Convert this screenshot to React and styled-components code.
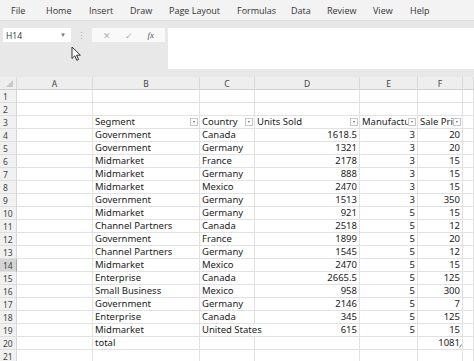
import React from "react";
import styled, { createGlobalStyle } from "styled-components";

const Global = createGlobalStyle`
  html, body { margin: 0; padding: 0; background: #ffffff; overflow: hidden; }
  body { font-family: "Noto Sans", "Open Sans", sans-serif; }
`;

const Page = styled.div`
  width: 474px;
  height: 361px;
  position: relative;
  overflow: hidden;
  background: #e8e8e8;
`;

const MenuBar = styled.div`
  height: 20px;
  display: flex;
  align-items: center;
  background: #f3f3f3;
  border-bottom: 1px solid #dcdcdc;
  padding-left: 11px;
  font-family: "Open Sans", sans-serif;
  font-size: 9px;
  color: #333;
`;

const MenuItem = styled.span`
  width: ${(p) => p.$w}px;
  flex: none;
  white-space: nowrap;
`;

const ToolRow = styled.div`
  height: 56px;
  display: flex;
  align-items: flex-start;
  padding-top: 7px;
  box-sizing: border-box;
  padding-left: 3px;
`;

const NameBox = styled.div`
  width: 68px;
  height: 14px;
  background: #fff;
  display: flex;
  align-items: center;
  justify-content: space-between;
  padding: 0 5px 0 3px;
  box-sizing: border-box;
  font-family: "Open Sans", sans-serif;
  font-size: 8.5px;
  color: #333;
`;

const Caret = styled.span`
  font-size: 6px;
  color: #777;
`;

const Dots = styled.div`
  width: 21px;
  height: 14px;
  display: flex;
  align-items: center;
  justify-content: center;
  color: #aaa;
  font-size: 9px;
`;

const FxBox = styled.div`
  width: 73px;
  height: 14px;
  background: #f9f9f9;
  display: flex;
  align-items: center;
  justify-content: space-around;
  padding: 0 4px;
  box-sizing: border-box;
  color: #b0b0b0;
  font-size: 9px;
`;

const Fx = styled.span`
  font-family: "Liberation Serif", serif;
  font-style: italic;
  color: #555;
  font-size: 9px;
`;

const FormulaBar = styled.div`
  flex: 1;
  height: 41px;
  margin-left: 3px;
  background: #fff;
`;

const Grid = styled.div`
  display: grid;
  grid-template-columns: 17px 76px 107px 55px 105px 58px 45px 1fr;
  grid-auto-rows: 13px;
  background: #fff;
  font-family: "Noto Sans", "Open Sans", sans-serif;
  font-size: 9.5px;
  color: #222;
`;

const ColHead = styled.div`
  height: 13px;
  background: #eeeeee;
  border-right: 1px solid #dadada;
  border-bottom: 1px solid #d0d0d0;
  box-sizing: border-box;
  display: flex;
  align-items: center;
  justify-content: center;
  font-size: 8.5px;
  color: #444;
  position: relative;
`;

const Corner = styled.span`
  position: absolute;
  right: 3px;
  bottom: 2px;
  width: 0;
  height: 0;
  border-left: 7px solid transparent;
  border-bottom: 7px solid #c8c8c8;
`;

const RowHead = styled.div`
  background: ${(p) => (p.$sel ? "#d4d4d4" : "#f1f1f1")};
  border-right: 1px solid ${(p) => (p.$sel ? "#a8a8a8" : "#d6d6d6")};
  border-bottom: 1px solid #dedede;
  box-sizing: border-box;
  font-size: 8.5px;
  color: #444;
  display: flex;
  align-items: center;
  padding-left: 3px;
`;

const Cell = styled.div`
  border-right: 1px solid #e2e2e2;
  border-bottom: 1px solid #e2e2e2;
  box-sizing: border-box;
  display: flex;
  align-items: center;
  justify-content: ${(p) => (p.$num ? "flex-end" : "flex-start")};
  padding: 0 ${(p) => (p.$num ? "2px" : "0")} 0 ${(p) => (p.$num ? "0" : "2px")};
  white-space: nowrap;
  position: relative;
  line-height: 12px;
  z-index: ${(p) => (p.$over ? 1 : 0)};
`;

const HeadCell = styled.div`
  border-right: 1px solid #e2e2e2;
  border-bottom: 1px solid #e2e2e2;
  box-sizing: border-box;
  display: flex;
  align-items: center;
  padding: 0 1px 0 2px;
  white-space: nowrap;
  overflow: hidden;
  line-height: 12px;
`;

const HeadText = styled.span`
  flex: 1;
  min-width: 0;
  overflow: hidden;
`;

const CellText = styled.span`
  background: ${(p) => (p.$over ? "#fff" : "transparent")};
`;

const Filter = styled.span`
  flex: none;
  width: 8px;
  height: 8px;
  background: #fff;
  border: 1px solid #c6c6c6;
  box-sizing: border-box;
  display: flex;
  align-items: center;
  justify-content: center;
  &::after {
    content: "";
    width: 0;
    height: 0;
    border-left: 1.5px solid transparent;
    border-right: 1.5px solid transparent;
    border-top: 2px solid #666;
  }
`;

const Cursor = styled.svg`
  position: absolute;
  left: 71px;
  top: 46px;
`;

const Handle = styled.svg`
  position: absolute;
  right: 0px;
  bottom: 1px;
`;

const menu = [
  ["File", 35],
  ["Home", 43],
  ["Insert", 41],
  ["Draw", 39],
  ["Page Layout", 68],
  ["Formulas", 54],
  ["Data", 36],
  ["Review", 46],
  ["View", 37],
  ["Help", 30],
];

const cols = ["", "A", "B", "C", "D", "E", "F", ""];

const data = [
  ["Government", "Canada", "1618.5", "3", "20"],
  ["Government", "Germany", "1321", "3", "20"],
  ["Midmarket", "France", "2178", "3", "15"],
  ["Midmarket", "Germany", "888", "3", "15"],
  ["Midmarket", "Mexico", "2470", "3", "15"],
  ["Government", "Germany", "1513", "3", "350"],
  ["Midmarket", "Germany", "921", "5", "15"],
  ["Channel Partners", "Canada", "2518", "5", "12"],
  ["Government", "France", "1899", "5", "20"],
  ["Channel Partners", "Germany", "1545", "5", "12"],
  ["Midmarket", "Mexico", "2470", "5", "15"],
  ["Enterprise", "Canada", "2665.5", "5", "125"],
  ["Small Business", "Mexico", "958", "5", "300"],
  ["Government", "Germany", "2146", "5", "7"],
  ["Enterprise", "Canada", "345", "5", "125"],
  ["Midmarket", "United States", "615", "5", "15"],
];

function HeaderCell({ text }) {
  return (
    <HeadCell>
      <HeadText>{text}</HeadText>
      <Filter />
    </HeadCell>
  );
}

function EmptyRow({ n }) {
  return (
    <>
      <RowHead>{n}</RowHead>
      {[0, 1, 2, 3, 4, 5, 6].map((i) => (
        <Cell key={i} />
      ))}
    </>
  );
}

export default function App() {
  return (
    <Page>
      <Global />
      <MenuBar>
        {menu.map(([m, w]) => (
          <MenuItem key={m} $w={w}>
            {m}
          </MenuItem>
        ))}
      </MenuBar>
      <ToolRow>
        <NameBox>
          <span>H14</span>
          <Caret>▼</Caret>
        </NameBox>
        <Dots>⋮</Dots>
        <FxBox>
          <span>✕</span>
          <span>✓</span>
          <Fx>fx</Fx>
        </FxBox>
        <FormulaBar />
      </ToolRow>
      <Grid>
        {cols.map((c, i) => (
          <ColHead key={i}>{i === 0 ? <Corner /> : c}</ColHead>
        ))}
        <EmptyRow n={1} />
        <EmptyRow n={2} />
        <RowHead>3</RowHead>
        <Cell />
        <HeaderCell text="Segment" />
        <HeaderCell text="Country" />
        <HeaderCell text="Units Sold" />
        <HeaderCell text="Manufacturing Price" />
        <HeaderCell text="Sale Price" />
        <Cell />
        {data.map((r, idx) => (
          <React.Fragment key={idx}>
            <RowHead $sel={idx + 4 === 14}>{idx + 4}</RowHead>
            <Cell />
            <Cell>{r[0]}</Cell>
            <Cell $over={r[1] === "United States"}>
              <CellText $over={r[1] === "United States"}>{r[1]}</CellText>
            </Cell>
            <Cell $num>{r[2]}</Cell>
            <Cell $num>{r[3]}</Cell>
            <Cell $num>{r[4]}</Cell>
            <Cell />
          </React.Fragment>
        ))}
        <RowHead>20</RowHead>
        <Cell />
        <Cell>total</Cell>
        <Cell />
        <Cell />
        <Cell />
        <Cell $num>
          <span>1081</span>
          <Handle width="3" height="4" viewBox="0 0 3 4">
            <path d="M0.5 3.5 L2.5 0.5" stroke="#555" strokeWidth="0.8" />
          </Handle>
        </Cell>
        <Cell />
        <EmptyRow n={21} />
      </Grid>
      <Cursor width="12" height="16" viewBox="0 0 12 16">
        <path
          d="M1 1 L1 12.5 L3.8 9.8 L5.8 14.3 L7.6 13.5 L5.6 9.2 L9.4 9.2 Z"
          fill="#fff"
          stroke="#333"
          strokeWidth="1"
          strokeLinejoin="round"
        />
      </Cursor>
    </Page>
  );
}
